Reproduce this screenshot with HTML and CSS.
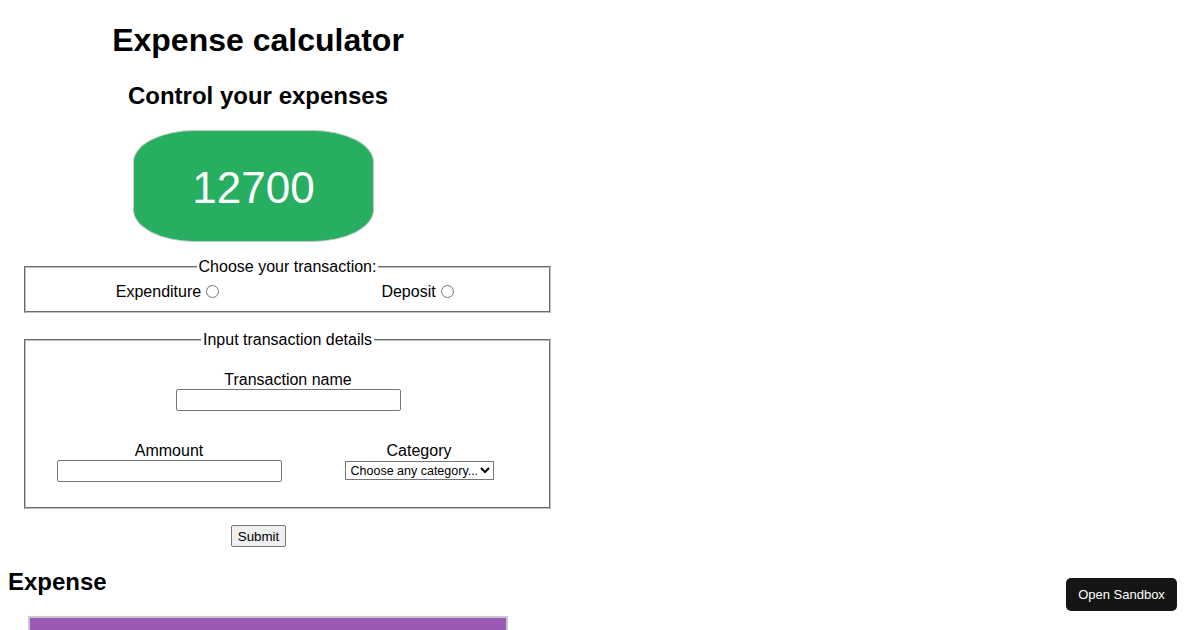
FILE: index.html
```html
<!DOCTYPE html>
<html>
<head>
<meta charset="utf-8">
<title>Expense calculator</title>
<link rel="stylesheet" href="styles.css">
</head>
<body>
<div class="app">
  <h1 class="title">Expense calculator</h1>
  <h2 class="subtitle">Control your expenses</h2>
  <div class="balance">12700</div>

  <fieldset class="box box-type">
    <legend>Choose your transaction:</legend>
    <div class="cols">
      <label class="col">Expenditure<input type="radio" name="type" class="radio"></label>
      <label class="col">Deposit<input type="radio" name="type" class="radio"></label>
    </div>
  </fieldset>

  <fieldset class="box box-details">
    <legend>Input transaction details</legend>
    <div class="single">
      <label class="lbl">Transaction name</label>
      <input type="text" class="text-input">
    </div>
    <div class="cols cols-inputs">
      <div class="col">
        <label class="lbl">Ammount</label>
        <input type="text" class="text-input">
      </div>
      <div class="col">
        <label class="lbl">Category</label>
        <select class="select">
          <option>Choose any category...</option>
        </select>
      </div>
    </div>
  </fieldset>

  <div class="submit-row">
    <button class="submit" type="button">Submit</button>
  </div>

  <h2 class="list-title">Expense</h2>
  <div class="expense-bar"></div>
</div>

<button class="sandbox" type="button">Open Sandbox</button>
</body>
</html>
```

FILE: styles.css
```css
html, body {
  margin: 0;
  padding: 0;
  background: #ffffff;
}

body {
  font-family: "Liberation Sans", Arial, sans-serif;
  font-size: 16px;
  color: #000000;
  overflow: hidden;
}

.app {
  width: 500px;
  padding-left: 8px;
  display: flex;
  flex-direction: column;
}

.title {
  margin: 22px 0 0;
  font-size: 32px;
  line-height: 37px;
  font-weight: bold;
  text-align: center;
}

.subtitle {
  margin: 23px 0 0;
  font-size: 24px;
  line-height: 28px;
  font-weight: bold;
  text-align: center;
}

.balance {
  align-self: flex-start;
  margin: 20px 0 0 125px;
  box-sizing: border-box;
  width: 241px;
  height: 112px;
  padding-top: 3px;
  background: #27ae60;
  border: 1px solid #c9c9c9;
  border-radius: 62px / 32px;
  color: #ffffff;
  font-size: 44px;
  display: flex;
  align-items: center;
  justify-content: center;
}

.box {
  box-sizing: border-box;
  width: 527px;
  margin: 0 0 0 16px;
  padding: 6px 12px 10px;
  border: 2px groove #c0c0c0;
  min-inline-size: 0;
}

.box legend {
  margin: 0 auto;
  padding: 0 2px;
  font-size: 16px;
  line-height: 18px;
}

.box-type {
  margin-top: 16px;
}

.box-details {
  margin-top: 18px;
  padding-bottom: 25px;
}

.cols {
  display: grid;
  grid-template-columns: 250px 250px;
  margin-left: 6px;
}

.col {
  display: flex;
  flex-direction: column;
  align-items: center;
  text-align: center;
}

.box-type .col {
  display: block;
  line-height: 18px;
}

.radio {
  width: 13px;
  height: 13px;
  margin: 3px 3px 0 5px;
  vertical-align: -1px;
}

.single {
  display: flex;
  flex-direction: column;
  align-items: center;
  margin-top: 15px;
  padding-left: 1px;
}

.lbl {
  display: block;
  line-height: 19px;
}

.text-input {
  box-sizing: border-box;
  width: 225px;
  height: 22px;
  margin: 0;
  padding: 1px 2px;
  border: 1px solid #767676;
  border-radius: 2px;
  font-family: "Liberation Sans", Arial, sans-serif;
  font-size: 13px;
}

.cols-inputs {
  margin-top: 30px;
}

.select {
  box-sizing: border-box;
  width: 149px;
  height: 19px;
  margin: 1px 0 0;
  padding: 0 0 0 1px;
  border: 1px solid #767676;
  border-radius: 0;
  font-family: "Liberation Sans", Arial, sans-serif;
  font-size: 12.5px;
  background: #ffffff;
  color: #000000;
}

.submit-row {
  display: flex;
  justify-content: center;
  margin-top: 16px;
  padding-left: 1px;
}

.submit {
  box-sizing: border-box;
  height: 22px;
  padding: 1px 6px;
  border: 1px solid #767676;
  border-radius: 2px;
  background: #efefef;
  font-family: "Liberation Sans", Arial, sans-serif;
  font-size: 13.33px;
  color: #000000;
}

.list-title {
  margin: 21px 0 0;
  font-size: 24px;
  line-height: 28px;
  font-weight: bold;
}

.expense-bar {
  box-sizing: border-box;
  width: 480px;
  height: 40px;
  margin: 20px 0 0 20px;
  background: #9b59b6;
  border: 2px solid #c8c8c8;
}

.sandbox {
  position: fixed;
  right: 23px;
  bottom: 19px;
  width: 111px;
  height: 33px;
  padding: 0;
  border: none;
  border-radius: 5px;
  background: #151515;
  color: #ffffff;
  font-family: "Liberation Sans", Arial, sans-serif;
  font-size: 13px;
}
```
